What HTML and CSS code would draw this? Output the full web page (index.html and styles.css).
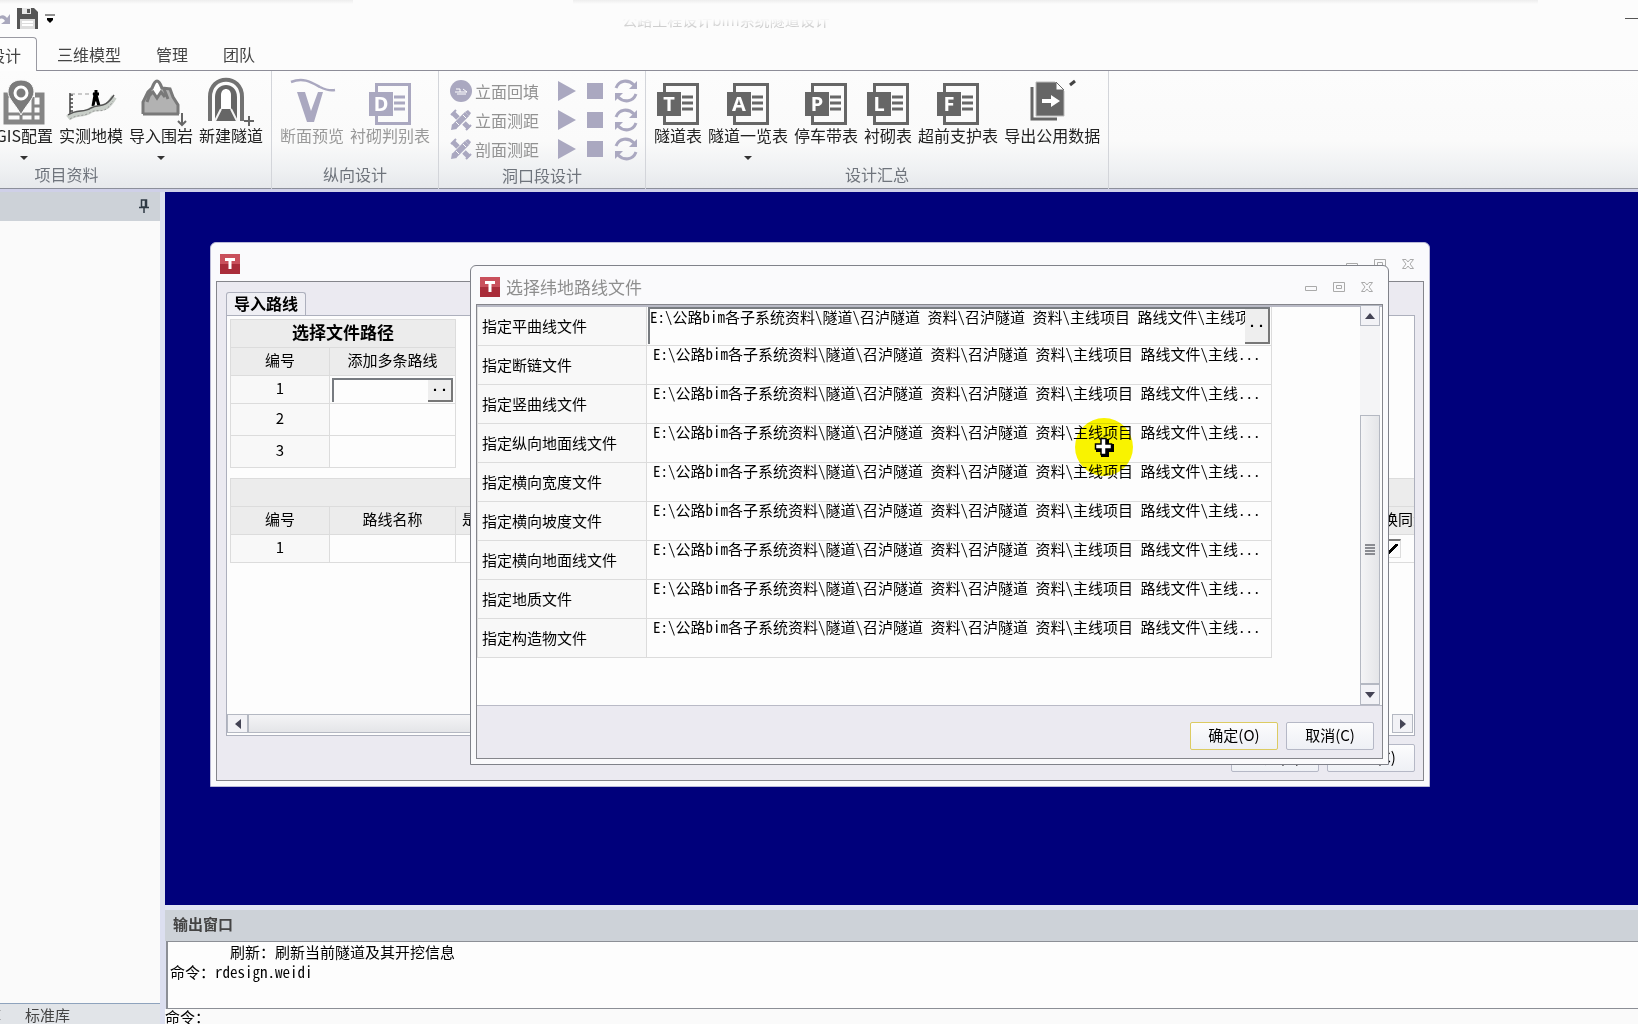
FILE: index.html
```
<!DOCTYPE html>
<html lang="zh-CN">
<head>
  <meta charset="UTF-8">
  <meta name="viewport" content="width=device-width, initial-scale=1.0">
  <title>公路工程设计bim系统隧道设计</title>
  <link rel="stylesheet" href="styles.css">
</head>
<body>
  <!-- Icônes partagées -->
  <svg class="defs" width="0" height="0">
    <symbol id="doc" viewBox="0 0 42 42">
      <path d="M7.500 9V1.500H40.500V40.500H7.500V33" fill="none" stroke="currentColor" stroke-width="3"/>
      <path d="M0 9H24V33H0Z" fill="currentColor"/>
      <path d="M25 14H36M25 20H36M25 26H36" stroke="currentColor" stroke-width="3"/>
    </symbol>
    <symbol id="play" viewBox="0 0 18 20"><path d="M0 0L18 10L0 20Z" fill="currentColor"/></symbol>
    <symbol id="stop" viewBox="0 0 16 16"><path d="M0 0H16V16H0Z" fill="currentColor"/></symbol>
    <symbol id="refresh" viewBox="0 0 24 24">
      <path d="M2 9C5 1 14 0 20 6M22 15C19 23 10 24 4 18" fill="none" stroke="currentColor" stroke-width="3"/>
      <path d="M23 2V10H15ZM1 22V14H9Z" fill="currentColor"/>
    </symbol>
    <symbol id="ruler" viewBox="0 0 22 22">
      <path d="M4 18L17 5" stroke="currentColor" stroke-width="6"/>
      <path d="M1 21L2 15L7 20ZM15 3L18 1L21 4L19 7Z" fill="currentColor"/>
      <path d="M3 4L8 9M14 14L19 19" stroke="currentColor" stroke-width="5"/>
      <path d="M1 6L6 1M16 21L21 16" stroke="currentColor" stroke-width="2"/>
      <path d="M6 13L9 16M13 6L16 9" stroke="#fafafa" stroke-width="1"/>
    </symbol>
    <symbol id="logo" viewBox="0 0 20 20">
      <path d="M0 0H20V10H0Z" fill="#c9505c"/>
      <path d="M0 10H20V20H0Z" fill="#a92c3a"/>
      <path d="M5 4H15V7H11.500V15H8.500V7H5Z" fill="#fff"/>
    </symbol>
    <symbol id="min" viewBox="0 0 12 10"><path d="M.5 4.500H11.500V8.500H.5Z" fill="none" stroke="currentColor"/></symbol>
    <symbol id="max" viewBox="0 0 12 10"><path d="M.5 .5H11.500V9.500H.5ZM3.500 3.500H8.500V6.500H3.500Z" fill="none" stroke="currentColor"/></symbol>
    <symbol id="close" viewBox="0 0 12 10"><path d="M.5 .5H4L6 3L8 .5H11.500L8 5L11.500 9.500H8L6 7L4 9.500H.5L4 5Z" fill="none" stroke="currentColor"/></symbol>
  </svg>

  <header class="titlebar">
    <div class="quick">
      <button class="icon-btn" aria-label="重做"><svg width="10" height="12" viewBox="0 0 10 12"><path d="M0 3C3 1 6 3 7 5L10 1V11H1L5 8C4 6 2 5 0 6Z" fill="#a9a8bd"/></svg></button>
      <button class="icon-btn" aria-label="保存"><svg width="21" height="21" viewBox="0 0 21 21"><path d="M0 0H17L21 4V21H0Z" fill="#555"/><path d="M5 0H14V6H5Z" fill="#e6e6e6"/><path d="M10 1H13V5H10Z" fill="#555"/><path d="M3 11H18V21H3Z" fill="#ddd"/><path d="M5 14H16M5 17H16" stroke="#fff" stroke-width="2"/></svg></button>
      <button class="icon-btn" aria-label="自定义"><svg width="10" height="9" viewBox="0 0 10 9"><path d="M0 1H10" stroke="#222" stroke-width="1"/><path d="M2 4H8V6L5 9L2 6Z" fill="#000"/></svg></button>
    </div>
    <div class="app-title">公路工程设计bim系统隧道设计</div>
    <button class="icon-btn" aria-label="最小化"><svg width="13" height="2" viewBox="0 0 13 2"><path d="M0 .5H13" stroke="#555"/></svg></button>
  </header>

  <nav class="tabs">
    <a href="#" class="active">设计</a>
    <a href="#">三维模型</a>
    <a href="#">管理</a>
    <a href="#">团队</a>
  </nav>

  <div class="ribbon">
    <section class="group first">
      <div class="tools">
        <button class="tool">
          <svg width="42" height="46" viewBox="0 0 42 46">
            <path d="M8 16H3V43H39V16H32" fill="none" stroke="#858585" stroke-width="5"/>
            <path d="M4 35H38M18 35V43M30 18V43M30 27H38" stroke="#858585" stroke-width="3"/>
            <path d="M18 1C9 1 5 7 5 13C5 20 14 27 18 36C22 27 31 20 31 13C31 7 27 1 18 1Z" fill="#7b7b7b" stroke="#fafafa"/>
            <circle cx="18" cy="14" r="6" fill="none" stroke="#fff" stroke-width="3"/>
          </svg>
          <span>GIS配置</span><i class="arrow"></i>
        </button>
        <button class="tool">
          <svg width="48" height="46" viewBox="0 0 48 46">
            <path d="M3 14V40M3 16H6M3 20H6M3 24H6M3 28H6M3 32H6" stroke="#444" stroke-width="1.500"/>
            <path d="M4 15H30" stroke="#999" stroke-dasharray="4 3"/>
            <path d="M29 11V15M26 15H32M28 16L26 27M29 16L32 27M27 21H31" stroke="#000" stroke-width="3"/>
            <path d="M1 39C10 32 17 37 24 31C32 26 37 35 47 18" fill="none" stroke="#c9cfc9" stroke-width="6"/>
            <path d="M1 36C10 30 17 34 24 29C32 24 37 31 47 16" fill="none" stroke="#555" stroke-width="1.500"/>
            <path d="M3 40C10 35 17 38 24 33C32 29 37 37 46 22" fill="none" stroke="#999" stroke-dasharray="2 2"/>
          </svg>
          <span>实测地模</span>
        </button>
        <button class="tool">
          <svg width="48" height="48" viewBox="0 0 48 48">
            <path d="M7 36V24L11 14L15 10L20 2L25 10L33 11L35 19L41 27V36Z" fill="#b2b2b2"/>
            <path d="M13 18L20 3L27 18L23 15L20 20L17 15Z" fill="#fff"/>
            <path d="M6 36H42M6 36V24L11 14L15 10Q20 -4 25 10L33 11L36 19L41 27V36M10 24L14 13M12 18L16 14L20 20L24 14L28 19M27 11L31 21" fill="none" stroke="#797979" stroke-width="3"/>
            <path d="M45 35V46M41 43L45 47L49 43" fill="none" stroke="#666" stroke-width="2"/>
          </svg>
          <span>导入围岩</span><i class="arrow"></i>
        </button>
        <button class="tool">
          <svg width="48" height="48" viewBox="0 0 48 48">
            <path d="M3 43V19C3 -4 35 -4 35 19V43" fill="none" stroke="#727272" stroke-width="4"/>
            <path d="M8 43V19C8 3 30 3 30 19V43Z" fill="#666"/>
            <path d="M14 31V17C14 9 24 9 24 17V31Z" fill="#fff"/>
            <path d="M8 43L14 31M30 43L24 31" fill="none" stroke="#f4f4f4" stroke-width="2"/>
            <path d="M42 38V48M37 43H47" stroke="#666" stroke-width="2"/>
          </svg>
          <span>新建隧道</span>
        </button>
      </div>
      <h2>项目资料</h2>
    </section>

    <section class="group">
      <div class="tools">
        <button class="tool" disabled>
          <svg width="50" height="46" viewBox="0 0 50 46">
            <path d="M4 3C16 -2 24 3 33 8C39 11 43 12 48 11" fill="none" stroke="currentColor" stroke-width="2.500"/>
            <path d="M10 13H18L24 32L31 13H36L27 43H20Z" fill="currentColor"/>
          </svg>
          <span>断面预览</span>
        </button>
        <button class="tool" disabled>
          <svg width="42" height="48" viewBox="0 -5 42 48"><use href="#doc" width="42" height="42"/><text x="12" y="28">D</text></svg>
          <span>衬砌判别表</span>
        </button>
      </div>
      <h2>纵向设计</h2>
    </section>

    <section class="group">
      <div class="small-tools">
        <div class="small-row">
          <button disabled><svg width="22" height="22" viewBox="0 0 22 22"><circle cx="11" cy="11" r="11" fill="currentColor"/><path d="M5 12H17L13 9M6 9H10V12M7 14H16" fill="none" stroke="#fff" stroke-width="1"/></svg>立面回填</button>
          <button disabled aria-label="开始"><svg width="18" height="20"><use href="#play"/></svg></button>
          <button disabled aria-label="停止"><svg width="16" height="16"><use href="#stop"/></svg></button>
          <button disabled aria-label="刷新"><svg width="24" height="24"><use href="#refresh"/></svg></button>
        </div>
        <div class="small-row">
          <button disabled><svg width="22" height="22"><use href="#ruler"/></svg>立面测距</button>
          <button disabled aria-label="开始"><svg width="18" height="20"><use href="#play"/></svg></button>
          <button disabled aria-label="停止"><svg width="16" height="16"><use href="#stop"/></svg></button>
          <button disabled aria-label="刷新"><svg width="24" height="24"><use href="#refresh"/></svg></button>
        </div>
        <div class="small-row">
          <button disabled><svg width="22" height="22"><use href="#ruler"/></svg>剖面测距</button>
          <button disabled aria-label="开始"><svg width="18" height="20"><use href="#play"/></svg></button>
          <button disabled aria-label="停止"><svg width="16" height="16"><use href="#stop"/></svg></button>
          <button disabled aria-label="刷新"><svg width="24" height="24"><use href="#refresh"/></svg></button>
        </div>
      </div>
      <h2>洞口段设计</h2>
    </section>

    <section class="group">
      <div class="tools">
        <button class="tool"><svg width="42" height="48" viewBox="0 -5 42 48"><use href="#doc" width="42" height="42"/><text x="12" y="28">T</text></svg><span>隧道表</span></button>
        <button class="tool"><svg width="42" height="48" viewBox="0 -5 42 48"><use href="#doc" width="42" height="42"/><text x="12" y="28">A</text></svg><span>隧道一览表</span><i class="arrow"></i></button>
        <button class="tool"><svg width="42" height="48" viewBox="0 -5 42 48"><use href="#doc" width="42" height="42"/><text x="12" y="28">P</text></svg><span>停车带表</span></button>
        <button class="tool"><svg width="42" height="48" viewBox="0 -5 42 48"><use href="#doc" width="42" height="42"/><text x="12" y="28">L</text></svg><span>衬砌表</span></button>
        <button class="tool"><svg width="42" height="48" viewBox="0 -5 42 48"><use href="#doc" width="42" height="42"/><text x="12" y="28">F</text></svg><span>超前支护表</span></button>
        <button class="tool">
          <svg width="46" height="44" viewBox="0 0 46 44">
            <path d="M3 7V39H28" fill="none" stroke="#666" stroke-width="3"/>
            <path d="M7 2H26L35 11V36H7Z" fill="#666" stroke="#bbb"/>
            <path d="M27 2V10H35Z" fill="#fff" stroke="#666"/>
            <path d="M13 19H22V15L31 21L22 27V23H13Z" fill="#fff"/>
            <path d="M41 5L46 1" stroke="#444" stroke-width="3"/>
          </svg>
          <span>导出公用数据</span>
        </button>
      </div>
      <h2>设计汇总</h2>
    </section>
  </div>

  <main class="workspace">
    <aside class="side">
      <div class="side-head">
        <button class="icon-btn" aria-label="固定"><svg width="10" height="14" viewBox="0 0 10 14"><path d="M2.500 1H7.500V8H2.500ZM0 8.500H10M5 9V14M6.500 1V8" fill="none" stroke="#2f3a44" stroke-width="1.500"/></svg></button>
      </div>
      <div class="side-body"></div>
      <div class="side-tabs"><a href="#">库</a><a href="#">标准库</a></div>
    </aside>

    <div class="stage">
      <div class="canvas">
        <!-- Fenêtre d'importation -->
        <section class="window import">
          <div class="window-title">
            <svg width="20" height="20"><use href="#logo"/></svg>
            <h3></h3>
            <button class="icon-btn" aria-label="最小化"><svg width="12" height="10"><use href="#min"/></svg></button>
            <button class="icon-btn" aria-label="最大化"><svg width="12" height="10"><use href="#max"/></svg></button>
            <button class="icon-btn" aria-label="关闭"><svg width="12" height="10"><use href="#close"/></svg></button>
          </div>
          <div class="window-body">
            <button class="page-tab">导入路线</button>
            <div class="page">
              <div class="tables">
                <table class="grid files">
                  <colgroup><col class="col-no"><col class="col-name"></colgroup>
                  <tr class="head"><th colspan="2" class="caption">选择文件路径</th></tr>
                  <tr class="head"><th>编号</th><th>添加多条路线</th></tr>
                  <tr><th>1</th><td class="edit"><div class="picker"><input type="text" aria-label="路线文件"><button>..</button></div></td></tr>
                  <tr class="tall"><th>2</th><td></td></tr>
                  <tr class="tall"><th>3</th><td></td></tr>
                </table>
                <table class="grid routes">
                  <colgroup><col class="col-no"><col class="col-name"><col><col class="col-last"></colgroup>
                  <tr class="head"><th colspan="4"></th></tr>
                  <tr class="head"><th>编号</th><th>路线名称</th><th class="left">是否</th><th class="sync">变换同步</th></tr>
                  <tr><th>1</th><td></td><td></td><td class="check"><input type="checkbox" aria-label="变换同步" checked></td></tr>
                </table>
              </div>
              <div class="hscroll">
                <button aria-label="向左"><svg width="6" height="10" viewBox="0 0 6 10"><path d="M6 0V10L0 5Z" fill="#445"/></svg></button>
                <div class="hthumb"></div>
                <button aria-label="向右"><svg width="6" height="10" viewBox="0 0 6 10"><path d="M0 0V10L6 5Z" fill="#445"/></svg></button>
              </div>
            </div>
            <div class="actions">
              <button>确定(O)</button>
              <button>取消(C)</button>
            </div>
          </div>
        </section>

        <!-- Fenêtre de choix des fichiers -->
        <section class="window picker-window">
          <div class="window-title">
            <svg width="20" height="20"><use href="#logo"/></svg>
            <h3>选择纬地路线文件</h3>
            <button class="icon-btn" aria-label="最小化"><svg width="12" height="10"><use href="#min"/></svg></button>
            <button class="icon-btn" aria-label="最大化"><svg width="12" height="10"><use href="#max"/></svg></button>
            <button class="icon-btn" aria-label="关闭"><svg width="12" height="10"><use href="#close"/></svg></button>
          </div>
          <div class="window-body">
            <div class="scroll-area">
              <table class="paths">
                <tr><th><label for="plane">指定平曲线文件</label></th><td class="editing"><div class="picker"><input type="text" id="plane" value="E:\公路bim各子系统资料\隧道\召泸隧道 资料\召泸隧道 资料\主线项目 路线文件\主线项目"><button>..</button></div></td></tr>
                <tr><th>指定断链文件</th><td>E:\公路bim各子系统资料\隧道\召泸隧道 资料\召泸隧道 资料\主线项目 路线文件\主线...</td></tr>
                <tr><th>指定竖曲线文件</th><td>E:\公路bim各子系统资料\隧道\召泸隧道 资料\召泸隧道 资料\主线项目 路线文件\主线...</td></tr>
                <tr><th>指定纵向地面线文件</th><td>E:\公路bim各子系统资料\隧道\召泸隧道 资料\召泸隧道 资料\主线项目 路线文件\主线...</td></tr>
                <tr><th>指定横向宽度文件</th><td>E:\公路bim各子系统资料\隧道\召泸隧道 资料\召泸隧道 资料\主线项目 路线文件\主线...</td></tr>
                <tr><th>指定横向坡度文件</th><td>E:\公路bim各子系统资料\隧道\召泸隧道 资料\召泸隧道 资料\主线项目 路线文件\主线...</td></tr>
                <tr><th>指定横向地面线文件</th><td>E:\公路bim各子系统资料\隧道\召泸隧道 资料\召泸隧道 资料\主线项目 路线文件\主线...</td></tr>
                <tr><th>指定地质文件</th><td>E:\公路bim各子系统资料\隧道\召泸隧道 资料\召泸隧道 资料\主线项目 路线文件\主线...</td></tr>
                <tr><th>指定构造物文件</th><td>E:\公路bim各子系统资料\隧道\召泸隧道 资料\召泸隧道 资料\主线项目 路线文件\主线...</td></tr>
              </table>
              <div class="vscroll">
                <button aria-label="向上"><svg width="10" height="6" viewBox="0 0 10 6"><path d="M0 6H10L5 0Z" fill="#445"/></svg></button>
                <div class="vtrack"></div>
                <div class="vthumb"><i></i><i></i><i></i><i></i></div>
                <button aria-label="向下"><svg width="10" height="6" viewBox="0 0 10 6"><path d="M0 0H10L5 6Z" fill="#445"/></svg></button>
              </div>
            </div>
            <div class="actions">
              <button class="default">确定(O)</button>
              <button>取消(C)</button>
            </div>
          </div>
        </section>

        <div class="pointer">
          <svg width="20" height="20" viewBox="0 0 20 20"><path d="M8 3H14V8H19V14H14V19H8V14H3V8H8Z" fill="#000" stroke="#000" stroke-width="2"/><path d="M7 1.500H12V7H17.500V12H12V17.500H7V12H1.500V7H7Z" fill="#fff" stroke="#000" stroke-width="1.500"/></svg>
        </div>
      </div>

      <section class="output">
        <h2>输出窗口</h2>
        <pre>        刷新：刷新当前隧道及其开挖信息
命令：rdesign.weidi</pre>
        <div class="prompt"><label for="command">命令：</label><input type="text" id="command"></div>
      </section>
    </div>
  </main>
</body>
</html>
```
FILE: styles.css
```
* {
  box-sizing: border-box;
}

body {
  margin: 0;
  height: 100vh;
  display: flex;
  flex-direction: column;
  overflow: hidden;
  background: #fcfcfc;
  color: #000;
  font-family: "Noto Sans CJK SC", sans-serif;
  font-size: 15px;
}

button,
input {
  margin: 0;
  padding: 0;
  border: 0;
  border-radius: 0;
  background: none;
  color: inherit;
  font: inherit;
}

h2,
h3 {
  margin: 0;
  font-weight: normal;
}

a {
  color: inherit;
  text-decoration: none;
}

svg {
  display: block;
  flex: none;
}

.defs {
  position: absolute;
}

.icon-btn {
  display: flex;
}

/* Barre de titre */
.titlebar {
  height: 37px;
  flex: none;
  display: flex;
  align-items: center;
  justify-content: space-between;
  background: linear-gradient(#eee, #fcfcfc) 0 0 / 353px 4px no-repeat, linear-gradient(#eee, #fcfcfc) right 100px top / 965px 4px no-repeat;
}

.quick {
  display: flex;
  align-items: center;
  gap: 7px;
}

.app-title {
  color: #bbb;
  margin-top: 3px;
  margin-right: 228px;
  line-height: 24px;
  -webkit-mask-image: linear-gradient(transparent 45%, rgba(0, 0, 0, 0.7) 75%);
  mask-image: linear-gradient(transparent 45%, rgba(0, 0, 0, 0.7) 75%);
}

/* Onglets */
.tabs {
  height: 34px;
  flex: none;
  display: flex;
  gap: 5px;
  margin-left: -27px;
  border-bottom: 1px solid #8d8d98;
  font-size: 16px;
  line-height: 34px;
  color: #444;
}

.tabs a {
  padding: 0 15px;
}

.tabs .active {
  height: 34px;
  background: #fdfdfd;
  border: 1px solid #9a9aa2;
  border-bottom: 0;
  border-radius: 0 4px 0 0;
}

/* Ruban */
.ribbon {
  height: 121px;
  flex: none;
  display: flex;
  overflow: hidden;
  background: linear-gradient(#fcfcfc, #fafafa 60%, #eef0f2 85%, #e6e8eb);
  border-bottom: 3px solid #cfd0e8;
  box-shadow: inset 0 -1px #8c8f9a;
}

.group {
  flex: none;
  display: flex;
  flex-direction: column;
  padding: 7px 5px 3px;
  border-right: 1px solid #d3d5da;
}

.first {
  width: 410px;
  margin-left: -138px;
}

.first .tools {
  justify-content: flex-end;
}

.group h2 {
  margin-top: auto;
  text-align: center;
  font-size: 16px;
  line-height: 24px;
  color: #6f747c;
}

.tools {
  display: flex;
}

.tool {
  display: flex;
  flex-direction: column;
  align-items: center;
  padding: 0 3px;
  font-size: 16px;
  line-height: 24px;
  color: #666;
}

.tool span {
  margin-top: -3px;
  color: #222;
}

.tool svg {
  height: 48px;
  overflow: visible;
}

.tool:disabled,
.small-row button:disabled {
  color: #aaa8c0;
}

.tool:disabled span {
  color: #999;
}

.tool text {
  fill: #fff;
  font: bold 20px "Noto Sans", sans-serif;
  text-anchor: middle;
}

.arrow {
  margin-top: 9px;
  border: 4px solid transparent;
  border-top-color: #333;
  border-bottom: 0;
}

.small-tools {
  margin-top: -2px;
  padding: 0 2px 0 6px;
}

.small-row {
  display: flex;
  align-items: center;
  gap: 11px;
  height: 29px;
}

.small-row button:first-child {
  display: flex;
  align-items: center;
  gap: 3px;
  margin-right: 8px;
  font-size: 16px;
}

.small-row button:first-child:disabled {
  color: #929292;
}

.small-row button:first-child svg {
  color: #aaa8c0;
}

/* Zone de travail */
.workspace {
  flex: 1;
  min-height: 0;
  display: flex;
  background: #dcdff0;
}

.side {
  width: 160px;
  flex: none;
  display: flex;
  flex-direction: column;
  margin-right: 5px;
  background: #fafafa;
}

.side-head {
  height: 29px;
  display: flex;
  align-items: center;
  justify-content: flex-end;
  padding: 0 11px 2px 0;
  background: #cdd2d8;
}

.side-body {
  flex: 1;
}

.side-tabs {
  height: 21px;
  display: flex;
  gap: 24px;
  overflow: hidden;
  border-top: 1px solid #8ea3bd;
  background: #e1e4e8;
  line-height: 21px;
  color: #444;
}

.side-tabs a:first-child {
  margin-left: -14px;
}

.stage {
  flex: 1;
  min-width: 0;
  display: flex;
  flex-direction: column;
}

.canvas {
  position: relative;
  flex: 1;
  overflow: hidden;
  background: #00007b;
}

/* Fenêtres */
.window {
  position: absolute;
  display: flex;
  flex-direction: column;
  padding: 0 5px 5px;
  border: 1px solid #80828a;
  border-radius: 6px 6px 0 0;
  background: #fafafc;
}

.import {
  left: 45px;
  top: 50px;
  width: 1220px;
  height: 545px;
  border-color: #b9b9d6;
}

.picker-window {
  left: 305px;
  top: 73px;
  width: 919px;
  height: 500px;
}

.window-title {
  height: 38px;
  flex: none;
  display: flex;
  align-items: center;
  gap: 16px;
  padding: 4px 10px 0 4px;
  color: #aaa;
}

.window-title h3 {
  flex: 1;
  margin-left: -10px;
  font-size: 17px;
  line-height: 24px;
  color: #8e8e8e;
}

.window-body {
  flex: 1;
  min-height: 0;
  display: flex;
  flex-direction: column;
  border: 1px solid #85868c;
  background: #ebeaf1;
}

.import .window-body {
  padding: 10px 8px 0 9px;
}

.page-tab {
  align-self: flex-start;
  height: 24px;
  padding: 0 7px 4px;
  margin-bottom: -1px;
  border: 1px solid #adb0bd;
  border-bottom: 0;
  border-radius: 3px 3px 0 0;
  background: #efeff4;
  font-size: 16px;
  font-weight: bold;
  line-height: 20px;
}

.page {
  height: 421px;
  display: flex;
  flex-direction: column;
  border: 1px solid #adb0bd;
  background: #fdfdfd;
}

.tables {
  flex: 1;
  overflow: hidden;
  padding: 3px 0 0 3px;
}

.grid {
  border-collapse: collapse;
  table-layout: fixed;
}

.files {
  width: 225px;
  margin-bottom: 10px;
}

.routes {
  width: 1240px;
}

.col-no {
  width: 99px;
}

.col-name {
  width: 126px;
}

.col-last {
  width: 130px;
}

.grid tr {
  height: 28px;
}

.grid .tall {
  height: 32px;
}

.grid th,
.grid td {
  padding: 0;
  border: 1px solid #dcdcdc;
  background: #fdfdfd;
  font-weight: normal;
  line-height: 20px;
}

.grid th {
  padding-bottom: 3px;
  background: #f8f8f8;
}

.grid .head th {
  background: #ececec;
}

.grid .caption {
  font-size: 17px;
  font-weight: bold;
}

.grid .left {
  padding-left: 6px;
  text-align: left;
}

.grid .sync {
  padding-left: 28px;
  text-align: left;
}

.check input {
  appearance: none;
  display: block;
  width: 19px;
  height: 19px;
  margin-left: 42px;
  border: 1px solid #ddd;
  border-top: 2px solid #777;
  border-left: 2px solid #777;
  background: linear-gradient(135deg, transparent 42%, #000 42% 60%, transparent 60%) center / 11px 10px no-repeat;
}

.picker {
  display: flex;
  height: 24px;
  margin: 1px 2px;
  border-top: 2px solid #777b80;
  border-left: 2px solid #777b80;
}

.picker input {
  flex: 1;
  min-width: 0;
}

.picker button {
  width: 25px;
  padding-bottom: 4px;
  border-right: 2px solid #777;
  border-bottom: 2px solid #777;
  background: #eee;
  font-family: "Liberation Mono", monospace;
  font-weight: bold;
  line-height: 14px;
}

/* Barres de défilement */
.hscroll {
  height: 21px;
  display: flex;
  justify-content: space-between;
  padding: 0 1px 2px 0;
}

.hscroll button,
.vscroll button {
  flex: none;
  display: flex;
  align-items: center;
  justify-content: center;
  width: 21px;
  border: 1px solid #b4b8c2;
  background: #f2f2f6;
}

.hthumb {
  width: 900px;
  margin-right: auto;
  border: 1px solid #b4b8c2;
  background: linear-gradient(#f4f4f6, #e4e5e8);
}

.vscroll {
  width: 20px;
  display: flex;
  flex-direction: column;
  margin-right: 2px;
  background: #f4f4f6;
}

.vscroll button {
  width: 20px;
  height: 21px;
}

.vtrack {
  flex: 1;
}

.vthumb {
  flex: 3;
  display: flex;
  flex-direction: column;
  align-items: center;
  justify-content: center;
  gap: 1px;
  border: 1px solid #b4b8c2;
  background: linear-gradient(90deg, #f4f4f6, #e4e5e8);
}

.vthumb i {
  width: 10px;
  height: 2px;
  background: #8a8c92;
}

.actions {
  display: flex;
  justify-content: flex-end;
  gap: 8px;
}

.import .actions {
  padding-top: 8px;
}

.picker-window .actions {
  padding: 16px 8px 8px;
}

.actions button {
  width: 88px;
  height: 28px;
  padding-bottom: 2px;
  border: 1px solid #b5b8c6;
  border-radius: 2px;
  background: linear-gradient(#fcfcfd, #eef0f5);
  line-height: 24px;
}

.actions .default {
  border-color: #dccb62;
}

/* Liste des chemins */
.scroll-area {
  flex: 1;
  min-height: 0;
  display: flex;
  justify-content: space-between;
  align-items: stretch;
  border-bottom: 1px solid #b9bac6;
  background: #fdfdfd;
  box-shadow: inset 0 2px #b9bac6;
}

.paths {
  width: 795px;
  align-self: flex-start;
  border-collapse: collapse;
  table-layout: fixed;
  font-feature-settings: "hwid";
}

.paths tr {
  height: 39px;
}

.paths th,
.paths td {
  padding: 0 6px;
  border: 1px solid #dcdcdc;
  font-weight: normal;
  line-height: 16px;
  text-align: left;
  white-space: nowrap;
  overflow: hidden;
}

.paths tr:first-child > * {
  border-top: 2px solid #b9bac6;
}

.paths th {
  width: 169px;
  padding: 0 4px;
  background: #f8f8f8;
}

.paths td {
  vertical-align: top;
}

.paths .editing {
  padding: 0;
}

.editing .picker {
  height: 37px;
  margin: 0 1px;
}

.editing input {
  padding-bottom: 20px;
  font-feature-settings: "hwid";
  line-height: 16px;
}

/* Curseur */
.pointer {
  position: absolute;
  left: 910px;
  top: 226px;
  width: 58px;
  height: 58px;
  display: flex;
  align-items: center;
  justify-content: center;
}

.pointer::before {
  content: "";
  position: absolute;
  inset: 0;
  border-radius: 50%;
  background: #fbf500;
  mix-blend-mode: multiply;
}

.pointer svg {
  z-index: 1;
}

/* Fenêtre de sortie */
.output {
  display: flex;
  flex-direction: column;
  border-top: 5px solid #dfe3f2;
}

.output h2 {
  height: 31px;
  padding-left: 8px;
  background: #cdd2d8;
  font-size: 15px;
  font-weight: bold;
  line-height: 28px;
  color: #444;
}

.output pre {
  height: 68px;
  margin: 0 0 0 1px;
  padding-left: 2px;
  border: solid #8c8f96;
  border-width: 1px 0 1px 2px;
  background: #fdfdfd;
  font: inherit;
  font-feature-settings: "hwid";
  line-height: 20px;
}

.prompt {
  height: 15px;
  display: flex;
  background: #fafafa;
  line-height: 16px;
}

.prompt input {
  flex: 1;
}
```
